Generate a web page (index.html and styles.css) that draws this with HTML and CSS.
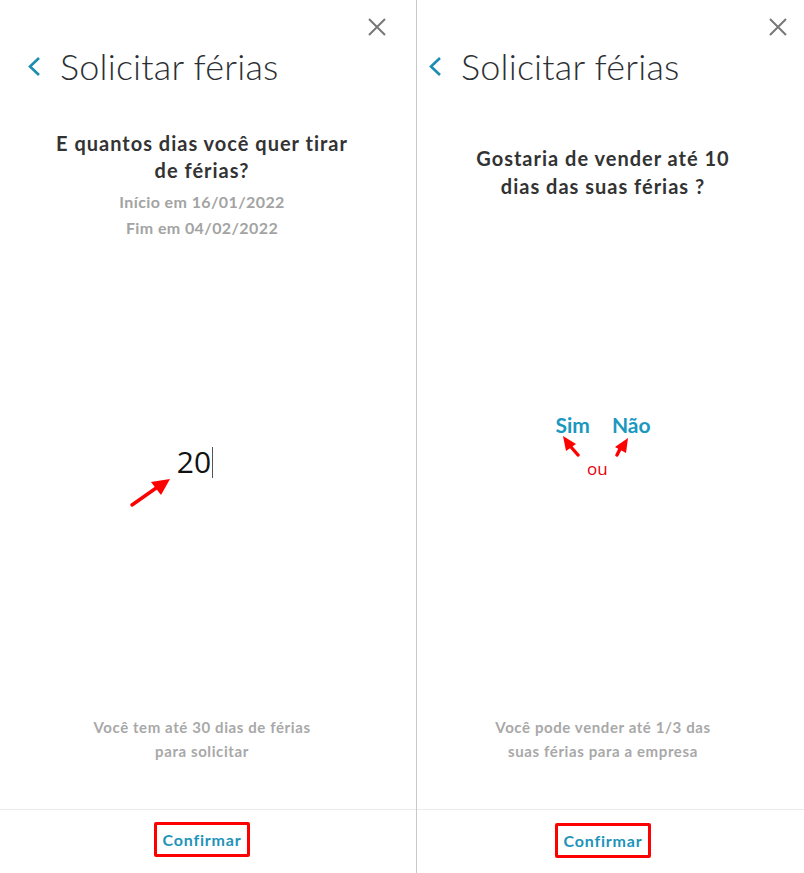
FILE: index.html
```html
<!DOCTYPE html>
<html lang="pt-BR">
<head>
  <meta charset="utf-8">
  <title>Solicitar férias</title>
  <link rel="stylesheet" href="styles.css">
</head>
<body>
<div class="app">

  <!-- passo 1: quantidade de dias -->
  <section class="panel panel-first">
    <div class="screen">
      <div class="topbar">
        <button class="close" type="button" aria-label="Fechar">
          <svg width="20" height="20" viewBox="0 0 20 20"><path d="M2 2 L18 18 M18 2 L2 18" stroke="#777" stroke-width="2" fill="none"/></svg>
        </button>
      </div>
      <div class="title-row">
        <svg class="back" width="14" height="20" viewBox="0 0 14 20"><polyline points="12,2 3,10.5 12,19" stroke="#1b8db0" stroke-width="2.6" fill="none"/></svg>
        <h1 class="title">Solicitar férias</h1>
      </div>

      <h2 class="question question-days">E quantos dias você quer tirar<br>de férias?</h2>
      <p class="dates">Início em 16/01/2022<br>Fim em 04/02/2022</p>

      <div class="field">
        <span class="field-value">20</span><span class="caret"></span>
        <svg class="pointer pointer-field" width="50" height="34" viewBox="0 0 50 34">
          <line x1="3" y1="31" x2="30" y2="12" stroke="#f00" stroke-width="3.4" stroke-linecap="round"/>
          <polygon points="41,5 22,8 32,21" fill="#f00"/>
        </svg>
      </div>

      <p class="note note-days">Você tem até 30 dias de férias<br>para solicitar</p>

      <div class="footer">
        <button class="confirm" type="button">Confirmar</button>
      </div>
    </div>
  </section>

  <!-- passo 2: abono pecuniário -->
  <section class="panel panel-second">
    <div class="screen">
      <div class="topbar">
        <button class="close" type="button" aria-label="Fechar">
          <svg width="20" height="20" viewBox="0 0 20 20"><path d="M2 2 L18 18 M18 2 L2 18" stroke="#777" stroke-width="2" fill="none"/></svg>
        </button>
      </div>
      <div class="title-row">
        <svg class="back" width="14" height="20" viewBox="0 0 14 20"><polyline points="12,2 3,10.5 12,19" stroke="#1b8db0" stroke-width="2.6" fill="none"/></svg>
        <h1 class="title">Solicitar férias</h1>
      </div>

      <h2 class="question question-sell">Gostaria de vender até 10<br>dias das suas férias ?</h2>

      <div class="choices">
        <button class="choice" type="button">Sim</button>
        <button class="choice" type="button">Não</button>
        <svg class="pointer pointer-choices" width="80" height="30" viewBox="0 0 80 30">
          <line x1="23" y1="28" x2="16" y2="20" stroke="#f00" stroke-width="3.4" stroke-linecap="round"/>
          <polygon points="8,9 21,17 11,24" fill="#f00"/>
          <line x1="62" y1="28" x2="65" y2="22" stroke="#f00" stroke-width="3.4" stroke-linecap="round"/>
          <polygon points="73,11 71,26 60,20" fill="#f00"/>
        </svg>
        <span class="or">ou</span>
      </div>

      <p class="note note-sell">Você pode vender até 1/3 das<br>suas férias para a empresa</p>

      <div class="footer footer-sell">
        <button class="confirm" type="button">Confirmar</button>
      </div>
    </div>
  </section>

</div>
</body>
</html>
```

FILE: styles.css
```css
* {
  box-sizing: border-box;
}

body {
  margin: 0;
  background: #fff;
  font-family: Lato, "Noto Sans", sans-serif;
  color: #333;
}

.app {
  display: flex;
  width: 804px;
  height: 873px;
  overflow: hidden;
}

.panel {
  height: 873px;
}

.panel-first {
  width: 417px;
  padding-right: 12px;
  border-right: 1px solid #c8c8c8;
}

.panel-second {
  width: 387px;
  overflow: hidden;
}

.panel-second .screen {
  margin-left: -16px;
}

.screen {
  width: 404px;
  height: 873px;
  display: flex;
  flex-direction: column;
}

/* cabeçalho */
.topbar {
  height: 44px;
  display: flex;
  justify-content: flex-end;
  padding: 17px 17px 0 0;
}

.close {
  width: 20px;
  height: 20px;
  padding: 0;
  border: 0;
  background: none;
  display: block;
}

.close svg {
  display: block;
}

.title-row {
  height: 44px;
  display: flex;
  align-items: center;
  padding-left: 27px;
}

.back {
  display: block;
  margin-right: 19px;
}

.title {
  margin: 0;
  font-family: Lato, sans-serif;
  font-weight: 300;
  font-size: 36px;
  line-height: 44px;
  color: #2b2f33;
  letter-spacing: 0.2px;
}

/* conteúdo */
.question {
  margin: 0;
  text-align: center;
  font-size: 20px;
  font-weight: 700;
  line-height: 27px;
  letter-spacing: 1px;
  color: #333;
}

.question-days {
  margin-top: 42px;
}

.question-sell {
  margin-top: 56px;
  line-height: 28px;
}

.dates {
  margin: 5px 0 0;
  text-align: center;
  font-size: 16px;
  font-weight: 700;
  line-height: 26px;
  letter-spacing: 0.4px;
  color: #a3a3a3;
}

.field {
  position: relative;
  margin-top: 203px;
  height: 36px;
  display: flex;
  justify-content: center;
  align-items: center;
  padding-right: 14px;
}

.field-value {
  font-family: "Open Sans", sans-serif;
  font-size: 30px;
  line-height: 36px;
  color: #111;
}

.caret {
  width: 1px;
  height: 31px;
  margin-left: 1px;
  background: #555;
}

/* setas de destaque */
.pointer {
  position: absolute;
}

.pointer-field {
  left: 129px;
  top: 30px;
}

.choices {
  position: relative;
  margin-top: 212px;
  display: flex;
  justify-content: center;
  gap: 22px;
}

.choice {
  padding: 0;
  border: 0;
  background: none;
  font-family: Lato, sans-serif;
  font-size: 21px;
  font-weight: 700;
  line-height: 26px;
  color: #1a98c0;
}

.pointer-choices {
  left: 154px;
  top: 15px;
}

.or {
  position: absolute;
  left: 186px;
  top: 45px;
  font-family: "Open Sans", sans-serif;
  font-size: 17px;
  line-height: 24px;
  color: #e8000b;
}

.note {
  margin: auto 0 46px;
  text-align: center;
  font-size: 15px;
  font-weight: 700;
  line-height: 24px;
  letter-spacing: 0.6px;
  color: #a8a8a8;
}

/* rodapé */
.footer {
  height: 64px;
  border-top: 1px solid #ececec;
  display: flex;
  justify-content: center;
  padding-top: 12px;
}

.panel-first .footer {
  margin-right: -12px;
  padding-right: 12px;
}

.footer-sell {
  padding-top: 13px;
}

.confirm {
  height: 35px;
  padding: 0 6px;
  border: 3px solid #f00;
  border-radius: 2px;
  background: #fff;
  font-family: Lato, sans-serif;
  font-size: 16px;
  font-weight: 700;
  line-height: 29px;
  letter-spacing: 0.8px;
  color: #1e93b8;
}
```
